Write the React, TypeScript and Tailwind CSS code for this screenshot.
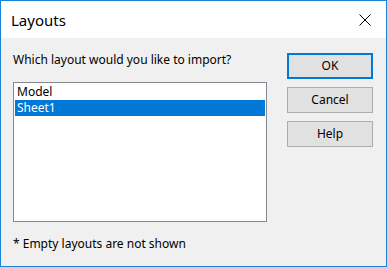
import React from "react";

export default function App() {
  const font = { fontFamily: '"Noto Sans", "Liberation Sans", sans-serif' };
  return (
    <div
      className="w-[387px] h-[267px] border border-[#1883d7] bg-[#f0f0f0] flex flex-col text-black"
      style={font}
    >
      <div className="h-[37px] bg-white flex items-center justify-between pl-[10px] pr-[15px] shrink-0">
        <span className="text-[15px] leading-[20px]">Layouts</span>
        <svg width="12" height="12" viewBox="0 0 12 12" className="mt-[1px]">
          <path d="M0.5 0.5 L11.5 11.5 M11.5 0.5 L0.5 11.5" stroke="#000" strokeWidth="1" fill="none" />
        </svg>
      </div>
      <div className="flex flex-row pl-[12px] pr-[13px]">
        <div className="w-[254px] flex flex-col pt-[14px]">
          <div className="text-[12px] leading-[16px] h-[16px] whitespace-nowrap">
            Which layout would you like to import?
          </div>
          <div className="mt-[14px] h-[140px] border border-[#828790] bg-white p-[1px]">
            <div className="h-[16px] text-[12px] leading-[16px] pl-[2px]">Model</div>
            <div className="h-[16px] text-[12px] leading-[16px] pl-[2px] bg-[#0078d7] text-white">Sheet1</div>
          </div>
          <div className="mt-[14px] text-[12px] leading-[16px] whitespace-nowrap">* Empty layouts are not shown</div>
        </div>
        <div className="ml-[20px] w-[86px] flex flex-col gap-[8px] pt-[15px]">
          <div className="h-[26px] border-2 border-[#0078d7] bg-[#e1e1e1] flex items-center justify-center text-[12px]">OK</div>
          <div className="h-[26px] border border-[#adadad] bg-[#e1e1e1] flex items-center justify-center text-[12px]">Cancel</div>
          <div className="h-[26px] border border-[#adadad] bg-[#e1e1e1] flex items-center justify-center text-[12px]">Help</div>
        </div>
      </div>
    </div>
  );
}
